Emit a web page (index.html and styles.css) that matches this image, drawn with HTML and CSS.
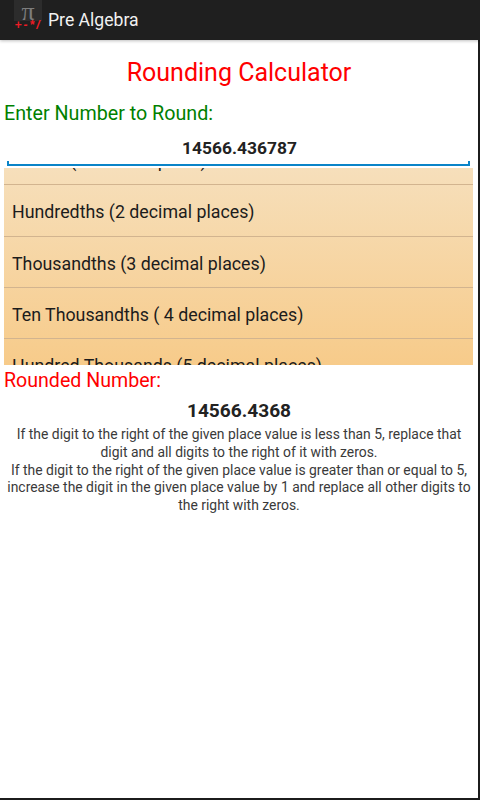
FILE: index.html
```html
<!DOCTYPE html>
<html lang="en">
  <head>
    <meta charset="UTF-8" />
    <title>Pre Algebra</title>
    <link rel="stylesheet" href="styles.css">
  </head>
  <body>
    <div class="screen">
      <!-- Action bar -->
      <header class="action-bar">
        <div class="app-icon">
          <span class="icon-pi">π</span>
          <span class="icon-ops">+-*/</span>
        </div>
        <span class="app-title">Pre Algebra</span>
      </header>

      <main>
        <h1>Rounding Calculator</h1>
        <label class="number-label">Enter Number to Round:</label>
        <div class="number-input">14566.436787</div>

        <!-- Place value list, scrolled -->
        <div class="place-list">
          <ul>
            <li>Tenths (1 decimal place)</li>
            <li>Hundredths (2 decimal places)</li>
            <li>Thousandths (3 decimal places)</li>
            <li>Ten Thousandths ( 4 decimal places)</li>
            <li>Hundred Thousands (5 decimal places)</li>
          </ul>
        </div>

        <p class="result-label">Rounded Number:</p>
        <p class="result">14566.4368</p>
        <p class="rule">If the digit to the right of the given place value is less than 5, replace that digit and all digits to the right of it with zeros.</p>
        <p class="rule">If the digit to the right of the given place value is greater than or equal to 5, increase the digit in the given place value by 1 and replace all other digits to the right with zeros.</p>
      </main>
    </div>
  </body>
</html>
```

FILE: styles.css
```css
* {
  margin: 0;
  padding: 0;
  box-sizing: border-box;
}

html,
body {
  height: 100%;
}

body {
  font-family: Roboto, sans-serif;
  background: #1c1c1c;
  overflow: hidden;
}

.screen {
  height: 798px;
  margin-right: 2px;
  background: #fff;
}

/* Action bar */
.action-bar {
  height: 40px;
  margin-right: -2px;
  display: flex;
  align-items: center;
  background: #1f1f1f;
  box-shadow: 0 1px 3px rgba(0, 0, 0, 0.25);
}

.app-icon {
  width: 28px;
  height: 30px;
  margin: 0 0 10px 14px;
  display: flex;
  flex-direction: column;
  align-items: center;
  background: linear-gradient(to bottom, #2c2c2c 70%, #1f1f1f 70%);
}

.icon-pi {
  height: 21px;
  font-family: "Liberation Serif", serif;
  font-size: 26px;
  line-height: 23px;
  color: #7d7d7d;
}

.icon-ops {
  font-family: "Liberation Sans", sans-serif;
  font-size: 12px;
  font-weight: bold;
  font-style: italic;
  line-height: 8px;
  letter-spacing: 2px;
  white-space: nowrap;
  color: #ee1c25;
}

.app-title {
  margin-left: 6px;
  font-size: 17.6px;
  color: #f2f2f2;
}

/* Main content */
h1 {
  margin-top: 17px;
  font-size: 25px;
  font-weight: normal;
  line-height: 32px;
  text-align: center;
  color: #ff0000;
}

.number-label {
  display: block;
  margin: 13px 0 0 4px;
  font-size: 19.7px;
  line-height: 24px;
  color: #008000;
}

.number-input {
  height: 36px;
  margin: 4px 8px 0 7px;
  padding-left: 2px;
  border-bottom: 2px solid #0a84c8;
  font-size: 17.4px;
  font-weight: bold;
  line-height: 36px;
  text-align: center;
  color: #222;
  position: relative;
}

.number-input::before,
.number-input::after {
  content: "";
  position: absolute;
  bottom: -2px;
  width: 2px;
  height: 5px;
  background: #0a84c8;
}

.number-input::before {
  left: 0;
}

.number-input::after {
  right: 0;
}

/* Place value list */
.place-list {
  height: 197px;
  margin: 2px 5px 0 4px;
  overflow: hidden;
  background: linear-gradient(to bottom, #f6dfbb, #f7cb8a);
}

.place-list ul {
  margin-top: -34px;
  list-style: none;
}

.place-list li {
  height: 51.3px;
  padding-left: 8px;
  border-bottom: 1px solid #d2b48f;
  font-size: 17.8px;
  line-height: 53px;
  color: #1c1c1c;
}

/* Result */
.result-label {
  margin-left: 4px;
  font-size: 19.6px;
  line-height: 32px;
  color: #ff0000;
}

.result {
  margin-top: 2px;
  font-size: 19.1px;
  font-weight: bold;
  line-height: 24px;
  text-align: center;
  color: #222;
}

.rule {
  padding: 0 4px;
  font-size: 13.9px;
  line-height: 17.8px;
  text-align: center;
  color: #3a3a3a;
}

.result + .rule {
  margin-top: 3px;
}
```
